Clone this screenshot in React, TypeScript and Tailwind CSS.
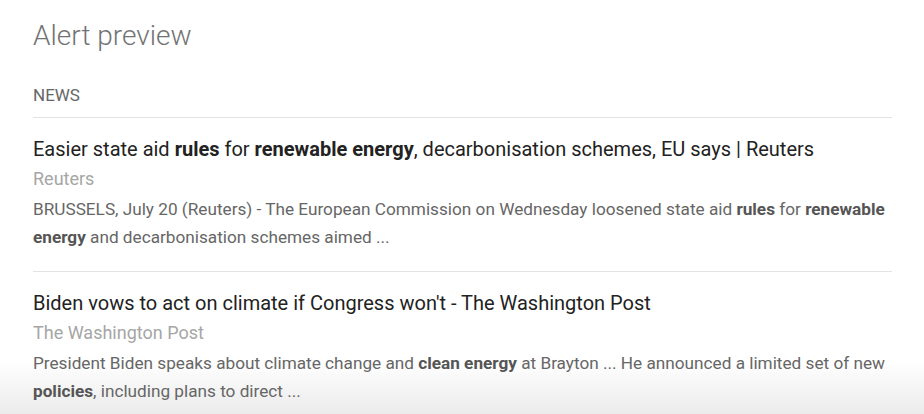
const items = [
  {
    title: (
      <>
        Easier state aid <b>rules</b> for <b>renewable energy</b>, decarbonisation schemes, EU says | Reuters
      </>
    ),
    source: 'Reuters',
    snippet: (
      <>
        BRUSSELS, July 20 (Reuters) - The European Commission on Wednesday loosened state aid <b>rules</b> for{' '}
        <b>renewable energy</b> and decarbonisation schemes aimed ...
      </>
    ),
  },
  {
    title: <>Biden vows to act on climate if Congress won't - The Washington Post</>,
    source: 'The Washington Post',
    snippet: (
      <>
        President Biden speaks about climate change and <b>clean energy</b> at Brayton ... He announced a limited
        set of new <b>policies</b>, including plans to direct ...
      </>
    ),
  },
];

export default function App() {
  return (
    <div className="w-[924px] h-[414px] overflow-hidden bg-gradient-to-b from-white from-[87%] to-[#ebebeb] font-['Roboto',sans-serif]">
      <div className="pl-[33px] pr-[32px] pt-[17px]">
        <h1 className="text-[28px] font-light text-[#737373] leading-[38px]">Alert preview</h1>

        <div className="mt-[30px] pb-[12px] border-b border-[#e3e3e3] text-[17px] text-[#666] leading-[20px]">
          NEWS
        </div>

        {items.map((item, i) => (
          <div
            key={i}
            className={'pt-[18px] pb-[20px] ' + (i === 0 ? 'border-b border-[#e3e3e3]' : '')}
          >
            <div className="text-[20px] text-[#222] leading-[26px] [&_b]:font-bold">{item.title}</div>
            <div className="mt-[5px] text-[18px] text-[#a6a6a6] leading-[24px]">{item.source}</div>
            <div className="mt-[4px] text-[17.2px] text-[#666] leading-[28px] [&_b]:font-bold [&_b]:text-[#555]">
              {item.snippet}
            </div>
          </div>
        ))}
      </div>
    </div>
  );
}
